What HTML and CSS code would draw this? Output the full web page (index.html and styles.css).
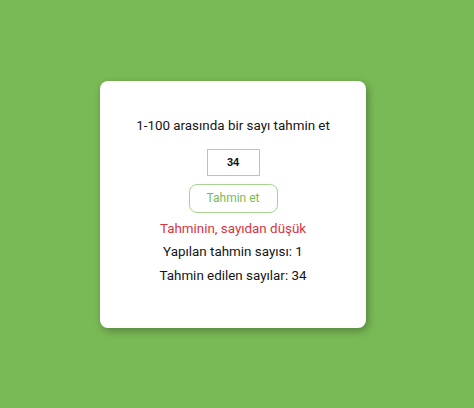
FILE: index.html
```html
<!DOCTYPE html>
<html lang="tr">
<head>
  <meta charset="UTF-8">
  <title>Sayı Tahmin Oyunu</title>
  <link rel="stylesheet" href="styles.css">
</head>
<body>
  <!-- Oyun kartı -->
  <div class="game">
    <p class="title">1-100 arasında bir sayı tahmin et</p>
    <input class="guess" type="text" value="34">
    <button class="submit">Tahmin et</button>
    <p class="result low">Tahminin, sayıdan düşük</p>
    <p class="result">Yapılan tahmin sayısı: 1</p>
    <p class="result">Tahmin edilen sayılar: 34</p>
  </div>
</body>
</html>
```

FILE: styles.css
```css
/* Genel sayfa: yeşil zemin, kart ortada */
body {
  margin: 0;
  height: 408px;
  padding-right: 8px;
  background: #7aba56;
  font-family: Roboto, "Liberation Sans", sans-serif;
  display: flex;
  justify-content: center;
  align-items: center;
}

/* Beyaz kart */
.game {
  width: 266px;
  height: 247px;
  box-sizing: border-box;
  padding-top: 36px;
  background: #fff;
  border-radius: 8px;
  box-shadow: 2px 3px 8px rgba(0, 0, 0, 0.3);
  display: flex;
  flex-direction: column;
  align-items: center;
  color: #151515;
}

.title {
  margin: 0 0 14px;
  font-size: 13.4px;
  line-height: 18px;
}

/* Sayı giriş kutusu */
.guess {
  width: 53px;
  height: 27px;
  box-sizing: border-box;
  border: 1px solid #a6d492;
  outline: none;
  text-align: center;
  font-family: "Liberation Sans", Arial, sans-serif;
  font-weight: bold;
  font-size: 11px;
  color: #111;
  padding: 0;
}

.submit {
  margin-top: 8px;
  width: 89px;
  height: 29px;
  background: #fff;
  border: 1px solid #a6d492;
  border-radius: 8px;
  color: #7aba56;
  font-family: Roboto, sans-serif;
  font-size: 12px;
  cursor: pointer;
}

/* Sonuç satırları */
.result {
  margin: 0;
  font-size: 13.4px;
  line-height: 23.5px;
}

.result.low {
  margin-top: 4px;
  color: #d9343f;
}
```
